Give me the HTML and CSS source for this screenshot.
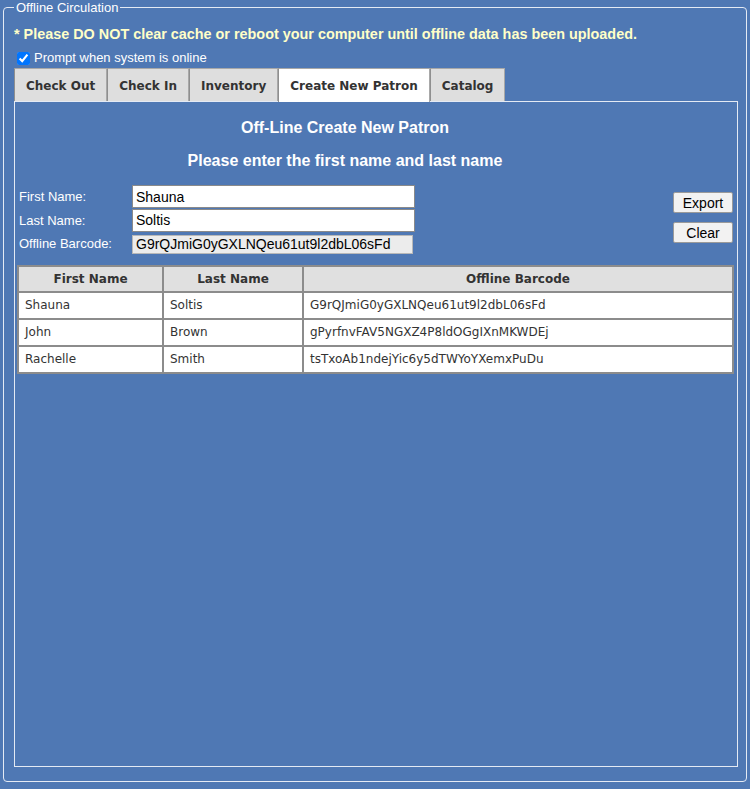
FILE: index.html
```html
<!DOCTYPE html>
<html>
<head>
<meta charset="utf-8">
<link rel="stylesheet" href="styles.css">
</head>
<body>
<fieldset class="circ">
  <legend class="circ-legend">Offline Circulation</legend>
  <div class="warning">* Please DO NOT clear cache or reboot your computer until offline data has been uploaded.</div>
  <label class="prompt"><input type="checkbox" class="prompt-box" checked> Prompt when system is online</label>
  <div class="tabs">
    <div class="tab">Check Out</div>
    <div class="tab">Check In</div>
    <div class="tab">Inventory</div>
    <div class="tab active">Create New Patron</div>
    <div class="tab">Catalog</div>
  </div>
  <div class="panel">
    <div class="top">
      <div class="main">
        <div class="title">Off-Line Create New Patron</div>
        <div class="subtitle">Please enter the first name and last name</div>
        <div class="form">
          <div class="row"><span class="lbl">First Name:</span><input class="field" type="text" value="Shauna"></div>
          <div class="row"><span class="lbl">Last Name:</span><input class="field" type="text" value="Soltis"></div>
          <div class="row"><span class="lbl">Offline Barcode:</span><input class="field readonly" type="text" value="G9rQJmiG0yGXLNQeu61ut9l2dbL06sFd" readonly></div>
        </div>
      </div>
      <div class="actions">
        <button class="btn">Export</button>
        <button class="btn">Clear</button>
      </div>
    </div>
    <table class="grid">
      <thead>
        <tr><th class="c1">First Name</th><th class="c2">Last Name</th><th>Offline Barcode</th></tr>
      </thead>
      <tbody>
        <tr><td>Shauna</td><td>Soltis</td><td>G9rQJmiG0yGXLNQeu61ut9l2dbL06sFd</td></tr>
        <tr><td>John</td><td>Brown</td><td>gPyrfnvFAV5NGXZ4P8ldOGgIXnMKWDEj</td></tr>
        <tr><td>Rachelle</td><td>Smith</td><td>tsTxoAb1ndejYic6y5dTWYoYXemxPuDu</td></tr>
      </tbody>
    </table>
  </div>
</fieldset>
</body>
</html>
```
FILE: styles.css
```css
html, body {
  margin: 0;
  padding: 0;
  background: #4f78b4;
  height: 100%;
}
body {
  font-family: "Liberation Sans", Arial, sans-serif;
  color: #fff;
  padding: 0 3px;
  box-sizing: border-box;
}
.circ {
  margin: 0;
  border: 1px solid #e4eaf4;
  border-radius: 4px;
  padding: 0 8px 14px 10px;
  height: 782px;
  box-sizing: border-box;
  display: flex;
  flex-direction: column;
}
.circ-legend {
  font-size: 13px;
  padding: 0 2px;
  margin-left: 0;
  color: #fff;
}
.warning {
  margin-top: 11px;
  font-weight: bold;
  font-size: 14.4px;
  color: #ffffc8;
  line-height: 17px;
}
.prompt {
  display: flex;
  align-items: center;
  font-size: 13px;
  margin-top: 7px;
  line-height: 16px;
}
.prompt-box {
  margin: 1px 4px 0 3px;
  width: 13px;
  height: 13px;
}
.tabs {
  display: flex;
  margin-top: 2px;
  position: relative;
  z-index: 1;
}
.tab {
  font-family: "DejaVu Sans", Verdana, sans-serif;
  font-weight: bold;
  font-size: 12px;
  color: #333;
  background: #dedede;
  border: 1px solid #a8a8a8;
  border-bottom: none;
  border-left-color: #8f8f8f;
  height: 33px;
  box-sizing: border-box;
  padding: 1px 11px 0 11px;
  display: flex;
  align-items: center;
}
.tab.active {
  background: #fff;
  height: 34px;
}
.panel {
  flex: 1;
  border: 1px solid #e4eaf4;
  margin-top: -1px;
  padding: 0 2px;
}
.top {
  display: flex;
}
.main {
  flex: 1;
}
.title {
  text-align: center;
  font-weight: bold;
  font-size: 16px;
  margin-top: 17px;
  line-height: 18px;
}
.subtitle {
  text-align: center;
  font-weight: bold;
  font-size: 16px;
  margin-top: 15px;
  line-height: 18px;
}
.form {
  margin-top: 15px;
  padding-left: 2px;
}
.row {
  display: flex;
  align-items: center;
  height: 23.5px;
}
.lbl {
  width: 113px;
  font-size: 13px;
}
.field {
  width: 283px;
  height: 23px;
  box-sizing: border-box;
  border: 1px solid #8a8a8a;
  font-family: "Liberation Sans", Arial, sans-serif;
  font-size: 14px;
  padding: 0 3px;
  margin: 0;
  color: #000;
  background: #fff;
}
.field.readonly {
  width: 281px;
  height: 19px;
  background: #ececec;
  border-color: #b8b8b8;
  margin-top: 1px;
}
.actions {
  display: flex;
  flex-direction: column;
  gap: 9px;
  padding-top: 90px;
  width: 61px;
  margin-right: 1px;
}
.btn {
  width: 60px;
  height: 21px;
  font-family: "Liberation Sans", Arial, sans-serif;
  font-size: 14px;
  background: #f2f2f2;
  border: 1px solid #9a9a9a;
  border-radius: 2px;
  color: #000;
  padding: 0;
}
.grid {
  margin-top: 9px;
  width: 717px;
  border-collapse: collapse;
  border: 2px solid #8c8c8c;
  font-family: "DejaVu Sans", Verdana, sans-serif;
  font-size: 12px;
  color: #333;
  background: #fff;
}
.grid th, .grid td {
  border: 2px solid #8c8c8c;
  height: 25px;
  padding: 0 6px;
}
.grid th {
  background: #e0e0e0;
  font-weight: bold;
  text-align: center;
  height: 24px;
}
.grid td {
  text-align: left;
}
.c1 { width: 131px; }
.c2 { width: 126px; }
```
